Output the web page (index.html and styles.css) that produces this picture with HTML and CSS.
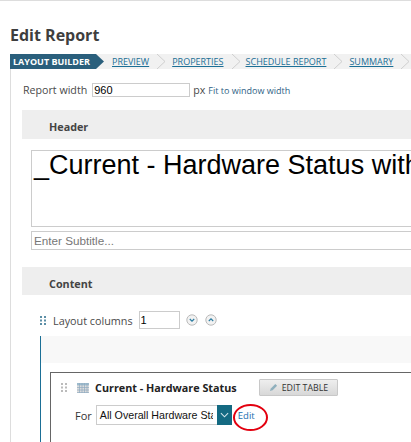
FILE: index.html
```html
<!DOCTYPE html>
<html lang="en">
<head>
<meta charset="utf-8">
<title>Edit Report</title>
<link rel="stylesheet" href="styles.css">
</head>
<body>
<div class="topline"></div>
<h1 class="title">Edit Report</h1>
<nav class="steps">
  <span class="step-active">LAYOUT BUILDER</span>
  <a class="step s1">PREVIEW</a>
  <svg class="chev" viewBox="0 0 10 15"><path d="M1 0l8 7.5L1 15" /></svg>
  <a class="step s2">PROPERTIES</a>
  <svg class="chev" viewBox="0 0 10 15"><path d="M1 0l8 7.5L1 15" /></svg>
  <a class="step s3">SCHEDULE REPORT</a>
  <svg class="chev" viewBox="0 0 10 15"><path d="M1 0l8 7.5L1 15" /></svg>
  <a class="step s4">SUMMARY</a>
  <svg class="chev" viewBox="0 0 10 15"><path d="M1 0l8 7.5L1 15" /></svg>
</nav>
<main class="panel">
  <div class="width-row">
    <span>Report width</span>
    <input class="width-input" value="960" readonly>
    <span class="px">px</span>
    <a class="fit">Fit to window width</a>
  </div>
  <section class="band band-header"><h2>Header</h2></section>
  <div class="title-box">_Current - Hardware Status with</div>
  <div class="subtitle-box">Enter Subtitle...</div>
  <section class="band band-content"><h2>Content</h2></section>
  <div class="columns-row">
    <svg class="grip" viewBox="0 0 6 9"><g fill="#5b8ea6"><rect width="2" height="2"/><rect x="4" width="2" height="2"/><rect y="3.5" width="2" height="2"/><rect x="4" y="3.5" width="2" height="2"/><rect y="7" width="2" height="2"/><rect x="4" y="7" width="2" height="2"/></g></svg>
    <span class="columns-label">Layout columns</span>
    <input class="columns-input" value="1" readonly>
    <svg class="round first" viewBox="0 0 12 12"><circle cx="6" cy="6" r="5.2"/><path d="M3.8 5l2.2 2.2L8.2 5"/></svg>
    <svg class="round" viewBox="0 0 12 12"><circle cx="6" cy="6" r="5.2"/><path d="M3.8 7L6 4.8 8.2 7"/></svg>
  </div>
  <div class="column">
    <div class="column-bar"></div>
    <div class="card">
      <div class="card-head">
        <svg class="grip grey" viewBox="0 0 6 9"><g fill="#bbb"><rect width="2" height="2"/><rect x="4" width="2" height="2"/><rect y="3.5" width="2" height="2"/><rect x="4" y="3.5" width="2" height="2"/><rect y="7" width="2" height="2"/><rect x="4" y="7" width="2" height="2"/></g></svg>
        <svg class="table-icon" viewBox="0 0 12 10"><rect width="12" height="10" fill="#dcdcdc"/><rect width="12" height="2.4" fill="#9dbbcd"/><path d="M0 4.5h12M0 7h12M0 9.5h12M2.5 0v10M5 0v10M7.5 0v10M10 0v10" stroke="#8fabc0" stroke-width=".7"/></svg>
        <strong class="card-title">Current - Hardware Status</strong>
        <button class="edit-table"><svg viewBox="0 0 10 10"><path d="M1 9l1-3 5-5 2 2-5 5z" fill="#8fb0bd"/></svg>EDIT TABLE</button>
      </div>
      <div class="card-for">
        <span class="for-label">For</span>
        <div class="select"><span class="select-text">All Overall Hardware Status</span><span class="select-btn"><svg viewBox="0 0 10 6"><path d="M1 1l4 4 4-4"/></svg></span></div>
        <span class="edit-wrap"><a class="edit-link">Edit</a><span class="ring"></span></span>
      </div>
    </div>
  </div>
</main>
</body>
</html>
```
FILE: styles.css
```css
* { box-sizing: border-box; }
html, body { margin: 0; padding: 0; }
body {
  width: 411px; height: 442px; overflow: hidden; background: #fff;
  font-family: "Open Sans", sans-serif; color: #444;
}
.topline { height: 1px; background: #ddd; }
.title { margin: 23px 0 0 10px; font-size: 16px; line-height: 22px; font-weight: 700; color: #3e3e3e; }
.steps {
  margin: 8px 0 0 10px; height: 15px; width: 401px; background: #f1f1f1;
  display: flex; align-items: center; font-size: 9px; white-space: nowrap;
}
.step-active {
  height: 15px; width: 94px; padding-left: 3px; line-height: 15px; background: #2a5f7c; color: #fff; font-weight: 700;
  clip-path: polygon(0 0, 86px 0, 94px 50%, 86px 100%, 0 100%);
}
.step { color: #1b6f96; text-decoration: underline; }
.s1 { margin-left: 8px; } .s2 { margin-left: 6px; } .s3 { margin-left: 5px; } .s4 { margin-left: 6px; }
.chev { width: 10px; height: 15px; margin-left: 7px; }
.chev path { fill: none; stroke: #cfcfcf; }
.panel { margin-left: 10px; border-left: 1px solid #ddd; width: 401px; height: 373px; overflow: hidden; }
.width-row { display: flex; align-items: center; height: 24px; margin-top: 9px; padding-left: 12px; font-size: 10.67px; color: #4a4a4a; }
.width-input { width: 98px; height: 14px; margin-left: 5px; padding: 0 0 0 1px; border: 1px solid #ccc; font: 11px "Liberation Sans", sans-serif; color: #000; outline: none; }
.px { margin-left: 3px; }
.fit { margin-left: 3px; font-size: 9px; color: #2f5f85; }
.band { background: #eee; height: 29px; margin-left: 11px; padding-top: 4px; display: flex; align-items: center; }
.band h2 { margin: 0 0 0 27px; font-size: 10.8px; font-weight: 700; color: #444; }
.band-header { margin-top: 8px; }
.title-box {
  margin: 11px 0 0 20px; height: 77px; width: 400px; border: 1px solid #ccc; border-right: 0; padding-left: 2px;
  font: 27px/29px "Liberation Sans", sans-serif; color: #000; white-space: nowrap; overflow: hidden;
}
.subtitle-box {
  margin: 4px 0 0 20px; height: 19px; width: 400px; border: 1px solid #ccc; border-right: 0; padding-left: 2px;
  font: 11.7px/17px "Liberation Sans", sans-serif; color: #777;
}
.band-content { margin-top: 17px; height: 28px; }
.columns-row { display: flex; align-items: center; height: 18px; margin: 16px 0 0 29px; font-size: 10.8px; color: #4a4a4a; }
.grip { width: 6px; height: 9px; }
.columns-label { margin-left: 7px; }
.columns-input { width: 41px; height: 18px; margin-left: 6px; padding: 0 0 0 1px; border: 1px solid #ccc; font: 11px "Liberation Sans", sans-serif; color: #000; outline: none; }
.round { width: 12px; height: 12px; margin-left: 7px; }
.round.first { margin-left: 6px; }
.round circle { fill: #f2f2f2; stroke: #bbb; }
.round path { fill: none; stroke: #2a7ba0; stroke-width: 1.2; }
.column { margin: 7px 0 0 29px; border-left: 1px solid #1b6f96; height: 110px; }
.column-bar { height: 27px; background: #f8f8f8; }
.card { margin: 9px 0 0 9px; width: 362px; height: 90px; border: 1px solid #666; border-right: 0; border-bottom: 0; }
.card-head { display: flex; align-items: center; height: 27px; padding: 2px 0 0 10px; }
.table-icon { width: 12px; height: 10px; margin-left: 10px; }
.card-title { margin-left: 6px; font-size: 10.8px; color: #222; white-space: nowrap; }
.edit-table {
  display: flex; align-items: center; height: 17px; width: 79px; margin-left: 22px; padding: 0 0 0 9px;
  border: 1px solid #c8c8c8; border-radius: 1px; background: linear-gradient(#eee, #d8d8d8);
  font: 8.8px "Open Sans", sans-serif; color: #333; white-space: nowrap;
}
.edit-table svg { width: 9px; height: 9px; margin-right: 4px; }
.card-for { display: flex; align-items: center; height: 20px; margin-top: 5px; padding-left: 24px; }
.for-label { font-size: 11px; color: #333; }
.select { display: flex; width: 136px; height: 20px; margin-left: 4px; border: 1px solid #ccc; background: #fff; }
.select-text { width: 116px; padding-left: 3px; overflow: hidden; white-space: nowrap; font: 10.67px/18px "Liberation Sans", sans-serif; color: #111; }
.select-btn { width: 15px; margin: -1px -1px -1px auto; background: #146a82; display: flex; align-items: center; justify-content: center; }
.select-btn svg { width: 9px; height: 6px; }
.select-btn path { fill: none; stroke: #d5e6ec; stroke-width: 1.2; }
.edit-wrap { position: relative; margin-left: 6px; font-size: 9.5px; }
.edit-link { color: #1b6fb0; }
.ring { position: absolute; left: -5px; top: -5px; width: 35px; height: 27px; border: 2px solid #e3000f; border-radius: 50%; }
```
